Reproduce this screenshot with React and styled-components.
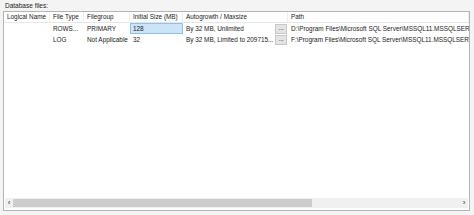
import React from 'react'
import styled, { createGlobalStyle } from 'styled-components'

const Global = createGlobalStyle`
  html, body {
    margin: 0;
    padding: 0;
    background: #f4f4f4;
  }
  body {
    font-family: "Liberation Sans", Arial, sans-serif;
    color: #1a1a1a;
  }
`

const Page = styled.div`
  width: 474px;
  height: 215px;
  box-sizing: border-box;
  padding: 1px 4px 4px 3px;
  display: flex;
  flex-direction: column;
`

const Label = styled.div`
  font-size: 6.5px;
  line-height: 10px;
  height: 10px;
  padding-left: 2px;
  color: #222;
`

const GridBox = styled.div`
  flex: 1;
  border: 1px solid #b4b4b4;
  background: #fff;
  display: flex;
  flex-direction: column;
  overflow: hidden;
`

const Table = styled.div`
  display: grid;
  grid-template-columns: 46px 34px 46px 53px 105px 1fr;
  grid-auto-rows: 11px;
  flex: 1;
  align-content: start;
  font-size: 6.4px;
  white-space: nowrap;
`

const Head = styled.div`
  line-height: 10px;
  padding-left: 3px;
  border-right: 1px solid #efefef;
  border-bottom: 1px solid #e6e6e6;
  overflow: hidden;
  color: #222;
`

const Cell = styled.div`
  line-height: 11px;
  padding-left: 3px;
  overflow: hidden;
  display: flex;
  align-items: center;
  background: ${p => (p.$selected ? '#cce4f7' : 'transparent')};
  box-shadow: ${p => (p.$selected ? 'inset 0 0 0 1px #8fc1ea' : 'none')};
  color: #222;
`

const Text = styled.span`
  overflow: hidden;
  flex: 1;
  min-width: 0;
`

const Dots = styled.span`
  width: 12px;
  height: 10px;
  margin: 0 1px;
  box-sizing: border-box;
  border: 1px solid #c8c8c8;
  background: #e4e4e4;
  font-size: 7px;
  line-height: 6px;
  text-align: center;
  letter-spacing: -0.3px;
  color: #444;
  flex: none;
`

const Scroll = styled.div`
  height: 10px;
  margin: 0 1px 2px 1px;
  display: flex;
  align-items: stretch;
  background: #f0f0f0;
`

const Arrow = styled.div`
  width: 8px;
  display: flex;
  align-items: center;
  justify-content: center;
  color: #606060;
  font-size: 8px;
  font-weight: bold;
  line-height: 1;
`

const Track = styled.div`
  flex: 1;
  display: flex;
`

const Thumb = styled.div`
  background: #cdcdcd;
  margin: 1px 0;
`

const columns = ['Logical Name', 'File Type', 'Filegroup', 'Initial Size (MB)', 'Autogrowth / Maxsize', 'Path']

const rows = [
  { name: '', type: 'ROWS...', group: 'PRIMARY', size: '128', growth: 'By 32 MB, Unlimited', path: 'D:\\Program Files\\Microsoft SQL Server\\MSSQL11.MSSQLSERVER\\MSSQL\\DATA\\', selected: true },
  { name: '', type: 'LOG', group: 'Not Applicable', size: '32', growth: 'By 32 MB, Limited to 209715...', path: 'F:\\Program Files\\Microsoft SQL Server\\MSSQL11.MSSQLSERVER\\MSSQL\\DATA\\' },
]

export default function App() {
  return (
    <>
      <Global />
      <Page>
        <Label>Database files:</Label>
        <GridBox>
          <Table>
            {columns.map(c => <Head key={c}>{c}</Head>)}
            {rows.map((r, i) => (
              <React.Fragment key={i}>
                <Cell>{r.name}</Cell>
                <Cell>{r.type}</Cell>
                <Cell>{r.group}</Cell>
                <Cell $selected={r.selected}>{r.size}</Cell>
                <Cell>
                  <Text>{r.growth}</Text>
                  <Dots>...</Dots>
                </Cell>
                <Cell>{r.path}</Cell>
              </React.Fragment>
            ))}
          </Table>
          <Scroll>
            <Arrow>‹</Arrow>
            <Track>
              <Thumb style={{ width: '67%' }} />
            </Track>
            <Arrow>›</Arrow>
          </Scroll>
        </GridBox>
      </Page>
    </>
  )
}
